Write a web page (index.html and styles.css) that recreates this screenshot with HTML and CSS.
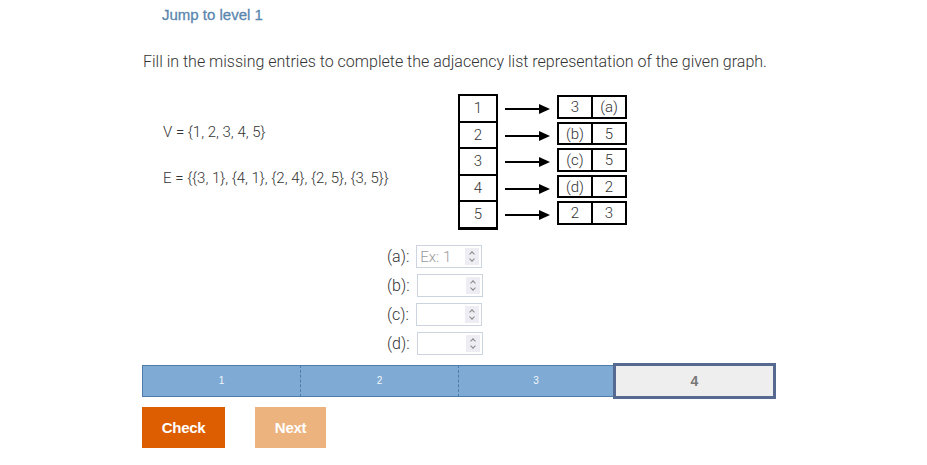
FILE: index.html
```html
<!DOCTYPE html>
<html lang="en">
<head>
  <meta charset="utf-8">
  <title>Adjacency list</title>
  <link rel="stylesheet" href="styles.css">
</head>
<body>
  <div class="level">
    <a href="javascript: void 0;" class="jump">Jump to level 1</a>

    <p class="prompt">Fill in the missing entries to complete the adjacency list representation of the given graph.</p>

    <div class="problem">
      <div class="sets">
        <div class="set">V = {1, 2, 3, 4, 5}</div>
        <div class="set">E = {{3, 1}, {4, 1}, {2, 4}, {2, 5}, {3, 5}}</div>
      </div>

      <div class="graph">
        <div class="vertices">
          <div class="vertex">1</div>
          <div class="vertex">2</div>
          <div class="vertex">3</div>
          <div class="vertex">4</div>
          <div class="vertex">5</div>
        </div>
        <div class="arrows">
          <span class="arrow"></span>
          <span class="arrow"></span>
          <span class="arrow"></span>
          <span class="arrow"></span>
          <span class="arrow"></span>
        </div>
        <div class="lists">
          <div class="list"><span>3</span><span>(a)</span></div>
          <div class="list"><span>(b)</span><span>5</span></div>
          <div class="list"><span>(c)</span><span>5</span></div>
          <div class="list"><span>(d)</span><span>2</span></div>
          <div class="list"><span>2</span><span>3</span></div>
        </div>
      </div>
    </div>

    <div class="answers">
      <label class="answer">(a): <span class="num"><input type="text" placeholder="Ex: 1"><i class="spin"></i></span></label>
      <label class="answer">(b): <span class="num"><input type="text"><i class="spin"></i></span></label>
      <label class="answer">(c): <span class="num"><input type="text"><i class="spin"></i></span></label>
      <label class="answer">(d): <span class="num"><input type="text"><i class="spin"></i></span></label>
    </div>

    <div class="progress">
      <div class="step done">1</div>
      <div class="step done">2</div>
      <div class="step done">3</div>
      <div class="step current">4</div>
    </div>

    <div class="buttons">
      <button class="btn check">Check</button>
      <button class="btn next">Next</button>
    </div>
  </div>
</body>
</html>
```

FILE: styles.css
```css
html, body {
  padding: 0;
  margin: 0;
}
body {
  font-family: Roboto, "Liberation Sans", sans-serif;
  font-weight: 300;
  color: #333;
  background: #fff;
}
.level {
  width: 634px;
  padding: 5px 0 0 142px;
}
.jump {
  display: inline-block;
  margin-left: 20px;
  font: 15px/18px "Liberation Sans", Arial, sans-serif;
  color: #5a86ae;
  text-decoration: none;
  -webkit-text-stroke: 0.3px #5a86ae;
}
.prompt {
  margin: 27px 0 0 1px;
  font-size: 16px;
  line-height: 22px;
}

/* graph */
.problem {
  display: flex;
  margin-top: 21px;
}
.sets {
  width: 295px;
  padding: 28px 0 0 21px;
  font-size: 15px;
}
.set {
  line-height: 20px;
  margin-bottom: 26px;
}
.graph {
  display: flex;
  align-items: flex-start;
}
.vertices {
  border: 2px solid #000;
  border-bottom-width: 1px;
  width: 36px;
}
.vertex {
  height: 24.5px;
  line-height: 25px;
  text-align: center;
  font-size: 15px;
  color: #333;
  border-bottom: 2px solid #000;
}
.arrows {
  display: flex;
  flex-direction: column;
  padding: 2px 7px 0 7px;
}
.arrow {
  position: relative;
  display: block;
  width: 45px;
  height: 26.5px;
}
.arrow:before {
  content: '';
  position: absolute;
  left: 0;
  top: 12px;
  width: 36px;
  height: 2px;
  background: #000;
}
.arrow:after {
  content: '';
  position: absolute;
  right: 0;
  top: 8px;
  border-left: 11px solid #000;
  border-top: 5px solid transparent;
  border-bottom: 5px solid transparent;
}
.lists {
  padding-top: 1px;
}
.list {
  display: flex;
  width: 66px;
  height: 19.5px;
  border: 2px solid #000;
  margin-bottom: 3px;
  font-size: 15px;
  color: #333;
}
.list span {
  flex: 1;
  text-align: center;
  line-height: 20px;
}
.list span + span {
  border-left: 2px solid #000;
}

/* answer inputs */
.answers {
  margin: 15px 0 0 245px;
}
.answer {
  display: flex;
  align-items: center;
  height: 24px;
  margin-bottom: 5px;
  font-size: 16px;
  color: #333;
}
.num {
  position: relative;
  display: inline-block;
  margin-left: 7px;
  width: 64px;
  height: 21px;
  border: 1px solid #ccd5df;
}
.num input {
  width: 44px;
  height: 21px;
  padding: 0 0 0 3px;
  border: 0;
  outline: none;
  font: 300 15px Roboto, sans-serif;
  color: #999;
}
.num input::placeholder {
  color: #999;
}
.spin {
  position: absolute;
  right: 2px;
  top: 2px;
  width: 14px;
  height: 17px;
  background: #eeedf3;
}
.spin:before,
.spin:after {
  content: '';
  position: absolute;
  left: 5px;
  width: 3px;
  height: 3px;
  border-left: 1px solid #888;
  border-top: 1px solid #888;
}
.spin:before {
  top: 4px;
  transform: rotate(45deg);
}
.spin:after {
  top: 9px;
  transform: rotate(225deg);
}

/* progress */
.progress {
  display: flex;
  margin-top: 9px;
  height: 32px;
}
.step {
  box-sizing: border-box;
  text-align: center;
  font: 10px/30px "Liberation Sans", Arial, sans-serif;
  color: #f2f6fa;
}
.step.done {
  flex: 0 0 158px;
  background: #7faad4;
  border-top: 1px solid #4d7cab;
  border-bottom: 1px solid #4d7cab;
}
.step.done:first-child {
  border-left: 1px solid #4d7cab;
}
.step.done + .step.done {
  border-left: 1px dashed #4d7cab;
}
.step.done:nth-child(3) {
  flex-basis: 155px;
}
.step.current {
  flex: 1;
  margin-top: -2px;
  height: 36px;
  background: #eee;
  border: 3px solid #566a91;
  font: bold 14px/30px "Liberation Sans", Arial, sans-serif;
  color: #777;
}

/* buttons */
.buttons {
  display: flex;
  gap: 30px;
  margin-top: 10px;
}
.btn {
  height: 41px;
  border: 0;
  padding: 0;
  color: #fff;
  font: bold 15px "Liberation Sans", Arial, sans-serif;
  letter-spacing: -0.3px;
}
.check {
  width: 83px;
  background: #dc5e00;
}
.next {
  width: 71px;
  background: #edb37e;
}
```
